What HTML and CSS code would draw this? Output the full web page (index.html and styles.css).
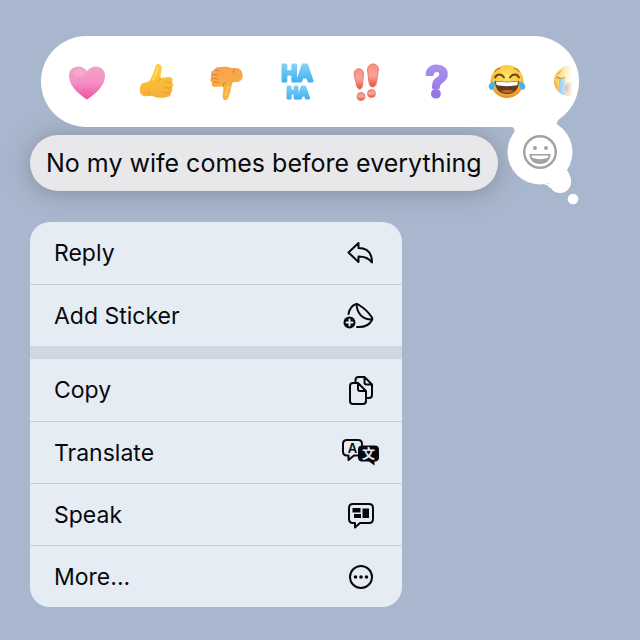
FILE: index.html
```html
<!DOCTYPE html>
<html lang="en">
<head>
    <meta charset="UTF-8">
    <meta name="viewport" content="width=device-width, initial-scale=1.0">
    <title>Messages</title>
    <link rel="stylesheet" href="styles.css">
</head>
<body>
    <svg class="defs" aria-hidden="true">
        <defs>
            <linearGradient id="pink" x1="0" y1="0" x2="0" y2="1">
                <stop offset="0" stop-color="#f2a3c6"/>
                <stop offset="0.5" stop-color="#f58fc6"/>
                <stop offset="1" stop-color="#ee4fa0"/>
            </linearGradient>
            <linearGradient id="yellow" x1="0" y1="0" x2="0" y2="1">
                <stop offset="0" stop-color="#fccd3c"/>
                <stop offset="1" stop-color="#f7ae35"/>
            </linearGradient>
            <linearGradient id="orange" x1="0" y1="0" x2="0" y2="1">
                <stop offset="0" stop-color="#f6a44e"/>
                <stop offset="1" stop-color="#fcb43c"/>
            </linearGradient>
            <linearGradient id="blue" x1="0" y1="0" x2="0" y2="1">
                <stop offset="0" stop-color="#8fd8f8"/>
                <stop offset="1" stop-color="#35a8ee"/>
            </linearGradient>
            <linearGradient id="red" x1="0" y1="0" x2="0" y2="1">
                <stop offset="0" stop-color="#f4907f"/>
                <stop offset="0.5" stop-color="#f8a497"/>
                <stop offset="1" stop-color="#e84f43"/>
            </linearGradient>
            <linearGradient id="purple" x1="0" y1="0" x2="0" y2="1">
                <stop offset="0" stop-color="#b09af0"/>
                <stop offset="1" stop-color="#8c6ce0"/>
            </linearGradient>
            <radialGradient id="face" cx="0.5" cy="0.35" r="0.65">
                <stop offset="0" stop-color="#ffe566"/>
                <stop offset="0.65" stop-color="#fbc53c"/>
                <stop offset="1" stop-color="#e58b27"/>
            </radialGradient>
        </defs>
    </svg>

    <div class="container">
        <div class="reactions">
            <div class="reaction-list">
                <button class="reaction" aria-label="Heart">
                    <svg viewBox="0 0 40 40">
                        <path d="M20 37.500C17 35.500 2 26 2 14C2 8 6 4.500 11 4.500C15 4.500 18.500 6.500 20 9.500C21.500 6.500 25 4.500 29 4.500C34 4.500 38 8 38 14C38 26 23 35.500 20 37.500Z" fill="url(#pink)"/>
                        <ellipse cx="12" cy="11" rx="6" ry="4" fill="#fff" opacity="0.14"/>
                    </svg>
                </button>
                <button class="reaction" aria-label="Thumbs up">
                    <svg viewBox="0 0 40 40">
                        <path d="M3.500 24C5 19 10 22 13 18C16 13.500 17 9 18.500 4C19.500 1 24 1.500 24.500 5C25 9 23 13 23.500 16L32 15C36 15 36.500 18.500 34.500 20C37 21.500 36.500 24.500 34.500 25.500C36 27 35.500 30 33.500 30.500C34.500 33 32 35 30 35C25 36.500 19 36 14 33.500C10 34.500 6 35 4 32C2.500 30 2.500 27 3.500 24Z" fill="url(#yellow)"/>
                        <path d="M34.500 20C32 21 29 20.500 28 19.500M34.500 25.500C31 26.500 28.500 26 27 25M33.500 30.500C30 31.500 28 31 26.500 30M23.500 16C23 18 22 19 20 20M14 33.500C12 33 11.500 31 11.500 29" fill="none" stroke="#e09a2c" stroke-width="1"/>
                        <path d="M20.500 5C20 9 18.500 14 16 18" fill="none" stroke="#ffe276" stroke-width="2" opacity="0.7"/>
                    </svg>
                </button>
                <button class="reaction" aria-label="Thumbs down">
                    <svg viewBox="0 0 40 40">
                        <path d="M4.500 13C3 10 5 8.500 7 8.500C8 5.500 11 4.500 14 5C18 4.500 22 4.500 26 6.500C30 5 35 7 35.500 12C37 18 32 21 26 20C24 23 24 29 21.500 35.500C20 39.500 15.500 38.500 15.500 35C15.500 31 17 27 16 24.500L7.500 25C4.500 24.500 4 22 5.500 20.500C3 19.500 2.500 17 4.500 16C3.500 15 3.500 14 4.500 13Z" fill="url(#orange)"/>
                        <path d="M7 8.500C9 7.500 11 8 12 9.500M4.500 13C7 12 9.500 12.500 11 14M4.500 16.500C8 16 10 16.500 11.500 18M5.500 20.500C8 19.500 11 20 12.500 21.500M16 24.500C16 22.500 17 21 19 20M26 6.500C27 8 26.500 10 26 11" fill="none" stroke="#cf8038" stroke-width="1"/>
                        <path d="M18.500 34L21.500 24" fill="none" stroke="#ffcf66" stroke-width="2" opacity="0.7"/>
                    </svg>
                </button>
                <button class="reaction" aria-label="Ha ha">
                    <svg viewBox="0 0 40 40">
                        <g fill="url(#blue)" stroke="url(#blue)" stroke-width="3" stroke-linejoin="round" text-anchor="middle">
                            <text class="balloon big" x="20" y="19">HA</text>
                            <text class="balloon small" x="21" y="36">HA</text>
                        </g>
                    </svg>
                </button>
                <button class="reaction" aria-label="Exclamation">
                    <svg viewBox="0 0 40 40">
                        <g fill="url(#red)" stroke="#e86a5e" stroke-width="0.800">
                            <path d="M7 12C7 5 16.500 5 16.500 12L15.500 23C15 28.500 10.500 28.500 9.500 23Z"/>
                            <path d="M20.500 8C20.500 0 31.500 0 31.500 7.500L29.500 20.500C28.500 26.500 22.500 26.500 22 20.500Z"/>
                            <circle cx="14" cy="34.500" r="4"/>
                            <circle cx="24.500" cy="31.500" r="4"/>
                        </g>
                    </svg>
                </button>
                <button class="reaction" aria-label="Question">
                    <svg viewBox="0 0 40 40">
                        <text class="balloon question" x="20" y="35" text-anchor="middle" fill="url(#purple)" stroke="url(#purple)" stroke-width="3" stroke-linejoin="round">?</text>
                    </svg>
                </button>
                <button class="reaction" aria-label="Tears of joy">
                    <svg viewBox="0 0 40 40">
                        <circle cx="20" cy="19.500" r="16.500" fill="url(#face)"/>
                        <path d="M8 15.500C10 11.500 14.500 11.500 17 15.500M23 15.500C25.500 11.500 30 11.500 32 15.500" fill="none" stroke="#70421a" stroke-width="1.800" stroke-linecap="round"/>
                        <path d="M8 9.500C9 7.500 11 6.500 13 6.500M27 6.500C29 6.500 31 7.500 32 9.500" fill="none" stroke="#c18228" stroke-width="1.200" stroke-linecap="round"/>
                        <path d="M8 19C15 20 25 20 32 19C32 28 27 32 20 32C13 32 8 28 8 19Z" fill="#653a18"/>
                        <path d="M9 19.500C16 20.500 24 20.500 31 19.500L30.500 23C25 24.500 15 24.500 9.500 23Z" fill="#fff"/>
                        <path d="M13 29C17 27.500 23 27.500 27 29C23 31.500 17 31.500 13 29Z" fill="#b8653a"/>
                        <path d="M8 20C3 20 1 23 2 26C4 30 8 28 8 20ZM32 20C37 20 39 23 38 26C36 30 32 28 32 20Z" fill="#45b4ee"/>
                    </svg>
                </button>
                <button class="reaction partial" aria-label="Crying">
                    <svg viewBox="0 0 36 36">
                        <circle cx="17" cy="17" r="15" fill="url(#face)"/>
                        <path d="M5 13C7 15 11 15 13 13M21 13C23 15 27 15 29 13" fill="none" stroke="#8a5a20" stroke-width="1.500"/>
                        <path d="M5 10C7 9 9 7.500 10 6" fill="none" stroke="#a87328" stroke-width="1"/>
                        <path d="M7 15H13V31C10 31 7 29 7 27ZM21 15H27V29L21 31Z" fill="#69b9ea"/>
                        <ellipse cx="17" cy="24" rx="4" ry="5" fill="#a0522d"/>
                    </svg>
                </button>
            </div>
        </div>

        <div class="message-row">
            <div class="message">No my wife comes before everything</div>
            <button class="emoji-button" aria-label="More emoji">
                <svg viewBox="0 0 74 96">
                    <g fill="#fff">
                        <path d="M0 16.500C5 17 8 17 7 21L50 20C49 16 49 13 52 9L0 9Z"/>
                        <circle cx="33" cy="42" r="32.500"/>
                        <path d="M34 74C39 74 41 76 43 78L60 60C62 64 64 65 64 72Z"/>
                        <circle cx="53" cy="72" r="11"/>
                        <circle cx="66" cy="89" r="5.300"/>
                    </g>
                    <circle cx="33" cy="42" r="15.800" fill="none" stroke="#a2a2a4" stroke-width="2.400"/>
                    <circle cx="28" cy="38" r="2" fill="#a2a2a4"/>
                    <circle cx="39" cy="38" r="2" fill="#a2a2a4"/>
                    <path d="M22.500 44H43.500C43.500 50.500 39.500 54 33 54C26.500 54 22.500 50.500 22.500 44Z" fill="#a2a2a4"/>
                    <path d="M24.500 45.500H41.500L41 48C36 49.500 30 49.500 25 48Z" fill="#fff"/>
                </svg>
            </button>
        </div>

        <div class="menu">
            <button class="menu-item">
                <span class="menu-label">Reply</span>
                <svg class="menu-icon" viewBox="0 0 40 32">
                    <path d="M8.500 15.500L18.500 6V11C27 11 32 16 32 25.500C28.500 20.500 24 19.500 18.500 19.500V25Z"/>
                </svg>
            </button>
            <button class="menu-item">
                <span class="menu-label">Add Sticker</span>
                <svg class="menu-icon" viewBox="0 0 40 32">
                    <path d="M8.500 14C9.500 9 12 5 16.500 4C17.500 4 18 4.500 19 5C24 8 29 13 32 17.500C32.500 18.500 32.500 19 32 20C29.500 25 24 27.500 17 27"/>
                    <path d="M16.500 4C17 13 22 19.500 31.500 19.500"/>
                    <circle class="solid" cx="9.500" cy="22.500" r="6"/>
                    <path class="light" d="M6.500 22.500H12.500M9.500 19.500V25.500"/>
                </svg>
            </button>
            <div class="menu-gap"></div>
            <button class="menu-item">
                <span class="menu-label">Copy</span>
                <svg class="menu-icon" viewBox="0 0 40 32">
                    <path d="M15.500 9V6C15.500 4 16.500 3 18.500 3H24.500L32 10.500V21C32 23 31 24 29 24H26M24.500 3V8.500C24.500 10 25 10.500 26.500 10.500H32"/>
                    <path d="M13 9H18L26 17V27C26 29 25 30 23 30H13C11 30 10 29 10 27V12C10 10 11 9 13 9ZM18 9V15C18 16.500 18.500 17 20 17H26"/>
                </svg>
            </button>
            <button class="menu-item">
                <span class="menu-label">Translate</span>
                <svg class="menu-icon" viewBox="0 0 40 32">
                    <path d="M18 18.500H14L8.500 23V18.500H7C4.500 18.500 3 17 3 14.500V7C3 4.500 4.500 3 7 3H18C20.500 3 22 4.500 22 7V8"/>
                    <text class="glyph" x="12.500" y="15.500">A</text>
                    <path class="solid" d="M22 8.500H35C37.500 8.500 39 10 39 12.500V20.500C39 23 37.500 24.500 35 24.500H34.500V28.500L29 24.500H22C19.500 24.500 18 23 18 20.500V12.500C18 10 19.500 8.500 22 8.500Z"/>
                    <text class="glyph cjk" x="28.500" y="21" lang="zh">文</text>
                </svg>
            </button>
            <button class="menu-item">
                <span class="menu-label">Speak</span>
                <svg class="menu-icon" viewBox="0 0 40 32">
                    <path d="M13 5H29C31.500 5 33 6.500 33 9V20C33 22.500 31.500 24 29 24H20L15 28.500V24H13C10.500 24 9 22.500 9 20V9C9 6.500 10.500 5 13 5Z"/>
                    <path class="solid" d="M12.500 9H20.500V13.500H12.500ZM22.500 9.500H29V19H22.500ZM14 15H21V19H14Z"/>
                </svg>
            </button>
            <button class="menu-item">
                <span class="menu-label">More...</span>
                <svg class="menu-icon" viewBox="0 0 40 32">
                    <circle cx="21" cy="16" r="11"/>
                    <circle class="solid" cx="15.500" cy="16" r="1.800"/>
                    <circle class="solid" cx="21" cy="16" r="1.800"/>
                    <circle class="solid" cx="26.500" cy="16" r="1.800"/>
                </svg>
            </button>
        </div>
    </div>
</body>
</html>
```

FILE: styles.css
```css
* {
    margin: 0;
    padding: 0;
    box-sizing: border-box;
}

body {
    min-height: 100vh;
    font-family: Inter, "Liberation Sans", sans-serif;
    color: #08090d;
    background-color: #a9b7ce;
}

button {
    font: inherit;
    color: inherit;
    background: none;
    border: none;
    cursor: pointer;
}

.defs {
    position: absolute;
    width: 0;
    height: 0;
}

.container {
    padding: 36px 61px 33px 30px;
}

.reactions {
    position: relative;
    z-index: 1;
    margin-left: 11px;
    padding: 0 6px 0 11px;
    background-color: #fff;
    border-radius: 46px;
}

.reaction-list {
    display: flex;
    height: 91px;
    overflow: hidden;
    mask-image: linear-gradient(to left, transparent, #000 20px);
}

.reaction {
    display: flex;
    flex: 0 0 70px;
    align-items: center;
    justify-content: center;
}

.reaction svg {
    width: 40px;
    height: 40px;
    overflow: visible;
}

.reaction.partial {
    justify-content: flex-start;
    padding-left: 10px;
}

.reaction.partial svg {
    width: 36px;
    height: 36px;
}

.balloon {
    font-weight: 600;
    line-height: 1;
}

.balloon.big {
    font-size: 21px;
}

.balloon.small {
    font-size: 15px;
}

.balloon.question {
    font-size: 42px;
}

.message-row {
    display: flex;
    align-items: center;
    gap: 9px;
    margin-top: 8px;
}

.message {
    padding: 12px 16px;
    font-size: 25px;
    line-height: 32px;
    white-space: nowrap;
    background-color: #e8e8ea;
    border-radius: 28px;
    box-shadow: 0 2px 24px rgba(80, 75, 85, 0.4);
}

.emoji-button {
    position: relative;
    z-index: 2;
    flex: 0 0 66px;
    height: 56px;
}

/* the bubble tail reaches up into the reaction bar */
.emoji-button svg {
    position: absolute;
    top: -25px;
    left: 0;
    width: 74px;
    height: 96px;
}

.menu {
    width: 372px;
    max-width: 100%;
    margin-top: 31px;
    overflow: hidden;
    background-color: #e6ecf4;
    border-radius: 20px;
}

.menu-item {
    display: flex;
    align-items: center;
    justify-content: space-between;
    width: 100%;
    height: 62px;
    padding: 0 22px 0 24px;
    text-align: left;
}

.menu-item + .menu-item {
    border-top: 1px solid #c4ccd8;
}

.menu-label {
    font-size: 23px;
    line-height: 30px;
}

.menu-gap {
    height: 13px;
    background-color: #d1d7e0;
}

.menu-icon {
    width: 40px;
    height: 32px;
    fill: none;
    stroke: #08090d;
    stroke-width: 2;
    stroke-linecap: round;
    stroke-linejoin: round;
}

.menu-icon .solid {
    fill: #08090d;
    stroke: none;
}

.menu-icon .light {
    stroke: #e6ecf4;
}

.glyph {
    font-size: 13px;
    font-weight: 600;
    text-anchor: middle;
    fill: #08090d;
    stroke: none;
}

.glyph.cjk {
    font-family: "Noto Sans CJK SC", sans-serif;
    font-weight: 700;
    fill: #e6ecf4;
}
```
